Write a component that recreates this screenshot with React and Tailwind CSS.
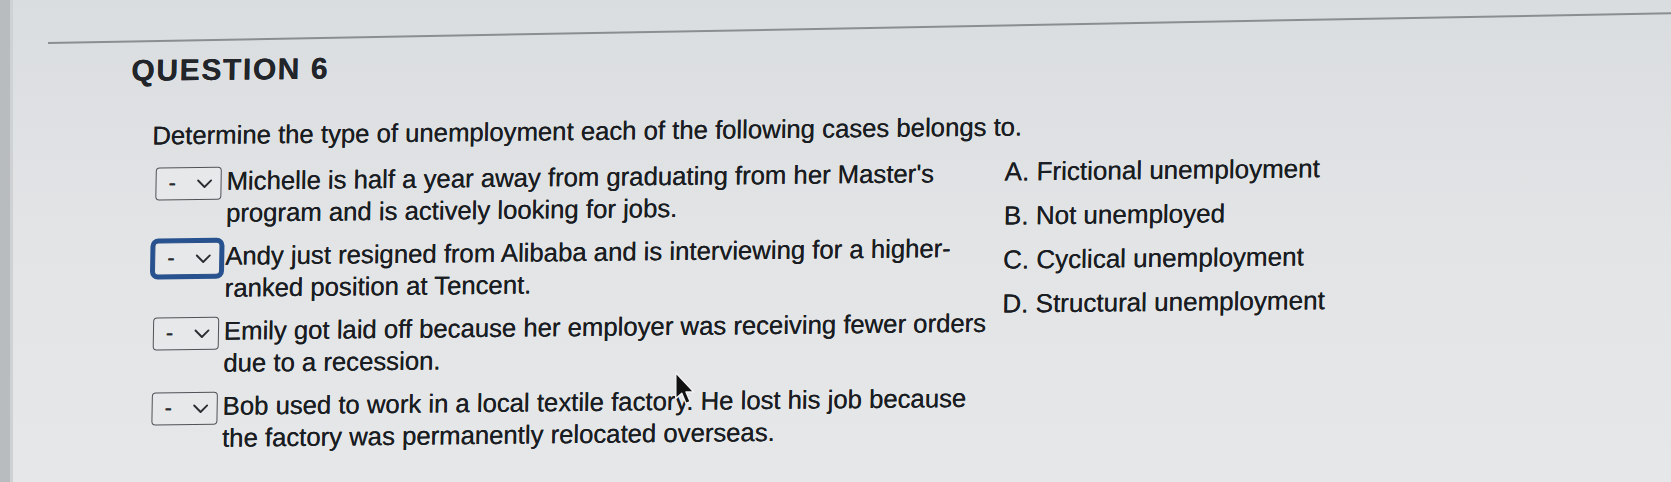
import React from "react";

function Select({ focused }) {
  return (
    <div
      className={
        "mt-[2px] w-[66px] h-[33px] shrink-0 rounded-[4px] border-[1.5px] bg-[#e6e8ea] flex items-center pl-[12px] pr-[8px] " +
        (focused
          ? "border-[#2a5089] ring-[4px] ring-[#27528f]"
          : "border-[#4f5256]")
      }
    >
      <span className="text-[22px] leading-none text-[#2a2d31] -mt-[2px]">-</span>
      <svg className="ml-auto" width="16" height="10" viewBox="0 0 16 10">
        <polyline
          points="1.5,1.5 8,8 14.5,1.5"
          fill="none"
          stroke="#2a2d31"
          strokeWidth="1.9"
          strokeLinecap="round"
          strokeLinejoin="round"
        />
      </svg>
    </div>
  );
}

const rows = [
  "Michelle is half a year away from graduating from her Master's program and is actively looking for jobs.",
  "Andy just resigned from Alibaba and is interviewing for a higher-ranked position at Tencent.",
  "Emily got laid off because her employer was receiving fewer orders due to a recession.",
  "Bob used to work in a local textile factory. He lost his job because the factory was permanently relocated overseas.",
];

const options = [
  "A. Frictional unemployment",
  "B. Not unemployed",
  "C. Cyclical unemployment",
  "D. Structural unemployment",
];

export default function App() {
  return (
    <div className="w-[1671px] h-[482px] overflow-hidden relative flex bg-linear-to-b from-[#dadddf] via-[#e2e4e6] to-[#e5e7e9] font-['Liberation_Sans',Arial,sans-serif] text-[#1a1d21] [text-shadow:0_0_0.6px_#1a1d21]">
      <div className="w-[10px] shrink-0 bg-[#b9bcbe]" />
      <div className="w-[3px] shrink-0 bg-[#cfd2d4]" />
      <div className="flex-1 flex flex-col">
        <div className="pt-[42px] pl-[35px]">
          <div className="h-[2px] w-[1640px] bg-[#8b8e91] origin-left rotate-[-1.05deg]" />
        </div>
        <div className="origin-top-left skew-x-[-1deg] skew-y-[-0.6deg] pl-[119px] pt-[12px]">
          <h1 className="text-[30px] leading-[32px] font-bold tracking-[1.6px] text-[#222529]">
            QUESTION 6
          </h1>
          <div className="pl-[26px] mt-[33px]">
            <p className="-ml-[4px] text-[25.7px] leading-[32px]">
              Determine the type of unemployment each of the following cases belongs to.
            </p>
            <div className="flex items-start mt-[14px]">
              <div className="flex flex-col gap-[11px]">
                {rows.map((t, i) => (
                  <div key={i} className="flex items-start gap-[5px]">
                    <Select focused={i === 1} />
                    <p className="w-[774px] text-[25.7px] leading-[32px]">{t}</p>
                  </div>
                ))}
              </div>
              <div className="ml-[4px] -mt-[1px] flex flex-col gap-[12px]">
                {options.map((o) => (
                  <p key={o} className="text-[26px] leading-[32px] whitespace-nowrap">
                    {o}
                  </p>
                ))}
              </div>
            </div>
          </div>
        </div>
      </div>
      <svg
        className="absolute left-[674px] top-[371px]"
        width="24"
        height="36"
        viewBox="0 0 20 30"
      >
        <path
          d="M1.5 1.5 L1.5 23 L6.5 18.5 L10 27 L13.5 25.5 L10 17.5 L16.5 17.5 Z"
          fill="#111"
          stroke="#f2f2f2"
          strokeWidth="1.2"
          strokeLinejoin="round"
        />
      </svg>
    </div>
  );
}
